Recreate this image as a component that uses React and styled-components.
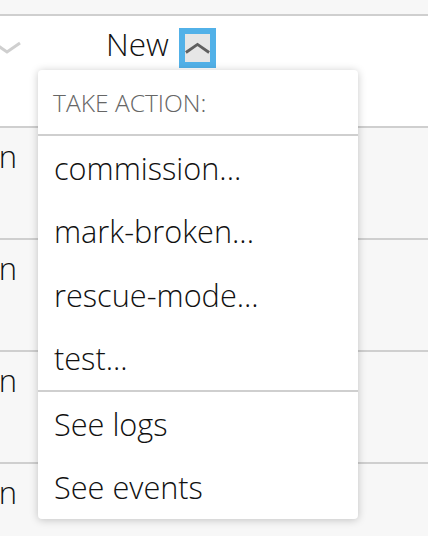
import React from "react";
import styled, { createGlobalStyle } from "styled-components";

const GlobalStyle = createGlobalStyle`
  body {
    margin: 0;
    background: #f7f7f7;
    font-family: "Open Sans", "Noto Sans", sans-serif;
    color: #111;
  }
`;

const Page = styled.div`
  width: 428px;
  height: 536px;
  overflow: hidden;
  background: #f7f7f7;
`;

const TopBand = styled.div`
  height: 14px;
  border-bottom: 2px solid #cfcfcf;
`;

const Row = styled.div`
  position: relative;
  height: 110px;
  display: grid;
  grid-template-columns: 17px 1fr;
  background: ${(p) => (p.$active ? "#fff" : "#f7f7f7")};
  border-bottom: 2px solid #cfcfcf;
`;

const LeadCell = styled.div`
  display: flex;
  justify-content: flex-end;
  white-space: nowrap;
  font-size: 31px;
  font-weight: 300;
  line-height: 36px;
  padding-top: 10px;
`;

const StatusCell = styled.div`
  display: flex;
  align-items: flex-start;
  gap: 10px;
  padding: 10px 0 0 89px;
  font-size: 31.5px;
  font-weight: 300;
  line-height: 36px;
`;

const ChevronBtn = styled.button`
  margin-top: 2px;
  width: 37px;
  height: 40px;
  padding: 0;
  border: 6px solid #52b1e8;
  background: #e6e6e6;
  display: flex;
  align-items: center;
  justify-content: center;
`;

const Menu = styled.div`
  position: absolute;
  left: 38px;
  top: 54px;
  width: 320px;
  background: #fff;
  border-radius: 4px;
  box-shadow: 0 1px 8px rgba(0, 0, 0, 0.22);
  z-index: 2;
`;

const MenuHeader = styled.div`
  height: 64px;
  padding: 0 15px;
  display: flex;
  align-items: center;
  font-size: 24.6px;
  font-weight: 300;
  color: #666;
  text-transform: uppercase;
  border-bottom: 2px solid #cfcfcf;
`;

const Group = styled.div`
  & + & {
    border-top: 2px solid #cfcfcf;
  }
`;

const Item = styled.div`
  height: 63.5px;
  padding: 0 16px;
  display: flex;
  align-items: center;
  font-size: 30.7px;
  font-weight: 300;
  color: #111;
`;

const ChevronDown = () => (
  <svg width="30" height="16" viewBox="0 0 30 16" style={{ marginTop: 14, marginRight: -5, flexShrink: 0 }}>
    <path d="M2 3 L15 12 L28 3" fill="none" stroke="#cfcfcf" strokeWidth="3" />
  </svg>
);

const ChevronUp = () => (
  <svg width="28" height="14" viewBox="0 0 28 14">
    <path d="M1 12 L14 3 L27 12" fill="none" stroke="#5f5f5f" strokeWidth="3.2" />
  </svg>
);

const actions = ["commission...", "mark-broken...", "rescue-mode...", "test..."];
const links = ["See logs", "See events"];

export default function App() {
  return (
    <Page>
      <GlobalStyle />
      <TopBand />
      <Row $active>
        <LeadCell>
          <ChevronDown />
        </LeadCell>
        <StatusCell>
          New
          <ChevronBtn aria-label="Toggle actions">
            <ChevronUp />
          </ChevronBtn>
        </StatusCell>
        <Menu>
          <MenuHeader>Take action:</MenuHeader>
          <Group>
            {actions.map((a) => (
              <Item key={a}>{a}</Item>
            ))}
          </Group>
          <Group>
            {links.map((l) => (
              <Item key={l}>{l}</Item>
            ))}
          </Group>
        </Menu>
      </Row>
      {[0, 1, 2, 3].map((i) => (
        <Row key={i}>
          <LeadCell>n</LeadCell>
          <StatusCell />
        </Row>
      ))}
    </Page>
  );
}
